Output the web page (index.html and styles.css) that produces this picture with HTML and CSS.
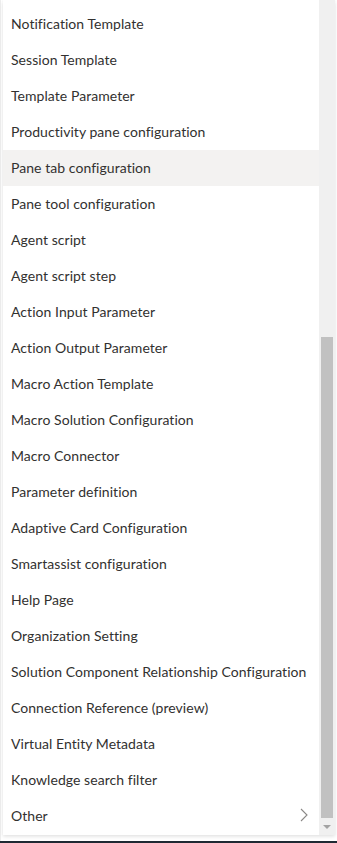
FILE: index.html
```html
<!DOCTYPE html>
<html>
<head>
<meta charset="utf-8">
<link rel="stylesheet" href="styles.css">
</head>
<body>
<div class="page">
  <div class="menu">
    <ul class="list">
      <li class="item">Notification Template</li>
      <li class="item">Session Template</li>
      <li class="item">Template Parameter</li>
      <li class="item">Productivity pane configuration</li>
      <li class="item active">Pane tab configuration</li>
      <li class="item">Pane tool configuration</li>
      <li class="item">Agent script</li>
      <li class="item">Agent script step</li>
      <li class="item">Action Input Parameter</li>
      <li class="item">Action Output Parameter</li>
      <li class="item">Macro Action Template</li>
      <li class="item">Macro Solution Configuration</li>
      <li class="item">Macro Connector</li>
      <li class="item">Parameter definition</li>
      <li class="item">Adaptive Card Configuration</li>
      <li class="item">Smartassist configuration</li>
      <li class="item">Help Page</li>
      <li class="item">Organization Setting</li>
      <li class="item">Solution Component Relationship Configuration</li>
      <li class="item">Connection Reference (preview)</li>
      <li class="item">Virtual Entity Metadata</li>
      <li class="item">Knowledge search filter</li>
      <li class="item submenu"><span>Other</span>
        <svg class="chev" width="8" height="14" viewBox="0 0 8 14"><path d="M1 1 L7 7 L1 13" fill="none" stroke="#8a8886" stroke-width="1.1"/></svg>
      </li>
    </ul>
    <div class="scrollbar">
      <div class="track"><div class="thumb"></div></div>
      <div class="arrow"></div>
    </div>
  </div>
  <div class="bottom"></div>
</div>
</body>
</html>
```
FILE: styles.css
```css
html, body {
  margin: 0;
  padding: 0;
}
body {
  background: #ffffff;
  font-family: "Segoe UI", Lato, "Open Sans", sans-serif;
  width: 337px;
  height: 843px;
  overflow: hidden;
}
.page {
  height: 843px;
  display: flex;
  flex-direction: column;
  padding-left: 3px;
  box-sizing: border-box;
  background: linear-gradient(to right, #eeeeee 0, #eeeeee 1px, #ffffff 1px);
}
.menu {
  width: 332px;
  height: 835px;
  display: flex;
  background: #ffffff;
  box-shadow: 0 1.6px 3.6px rgba(0,0,0,0.13), 0 0.3px 0.9px rgba(0,0,0,0.11);
}
.list {
  list-style: none;
  margin: 0;
  padding: 6px 0 0 0;
  flex: 1;
  overflow: hidden;
}
.item {
  height: 36px;
  box-sizing: border-box;
  display: flex;
  align-items: center;
  padding: 0 12px 2px 8px;
  font-size: 14px;
  letter-spacing: 0.05px;
  color: #323130;
  white-space: nowrap;
}
.item.active {
  background: #f3f2f1;
}
.submenu {
  justify-content: space-between;
}
.chev {
  margin-right: -1px;
}
.scrollbar {
  width: 16px;
  background: #f0f0f0;
  display: flex;
  flex-direction: column;
}
.track {
  flex: 1;
  display: flex;
  flex-direction: column;
  justify-content: flex-end;
  padding: 0 2px 0 2px;
}
.thumb {
  height: 481px;
  background: #c1c1c1;
}
.arrow {
  height: 17px;
  display: flex;
  align-items: center;
  justify-content: center;
}
.arrow::before {
  content: "";
  width: 0;
  height: 0;
  border-left: 4px solid transparent;
  border-right: 4px solid transparent;
  border-top: 4px solid #a3a3a3;
}
.bottom {
  margin-top: auto;
  height: 2px;
  margin-left: -3px;
  background: #1f2933;
}
```
